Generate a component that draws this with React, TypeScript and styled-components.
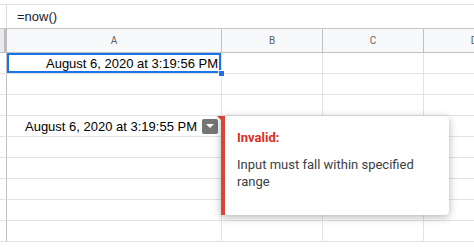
import { Fragment } from 'react';
import styled, { createGlobalStyle } from 'styled-components';

const GlobalStyle = createGlobalStyle`
  html, body {
    margin: 0;
    padding: 0;
    background: #fff;
  }
  * {
    box-sizing: border-box;
  }
`;

const Page = styled.div`
  position: relative;
  width: 474px;
  height: 247px;
  overflow: hidden;
  background: #fff;
  font-family: 'Liberation Sans', Arial, sans-serif;
`;

const TopStrip = styled.div`
  height: 5px;
  border-bottom: 1px solid #e0e0e0;
`;

const FormulaBar = styled.div`
  display: flex;
  height: 24px;
  border-bottom: 1px solid #c4c7c5;
`;

const FormulaGutter = styled.div`
  width: 7px;
  border-right: 1px solid #dadce0;
`;

const FormulaText = styled.div`
  padding-left: 10px;
  display: flex;
  align-items: center;
  font-size: 13px;
  color: #202124;
`;

const Sheet = styled.div`
  display: grid;
  grid-template-columns: 7px 215px 101px 101px 101px;
  grid-auto-rows: 21px;
  grid-template-rows: 24px;
`;

const Corner = styled.div`
  background: #e8eaed;
  border-right: 3px solid #bdbdbd;
  border-bottom: 1px solid #c0c0c0;
`;

const ColHeader = styled.div`
  display: flex;
  align-items: center;
  justify-content: center;
  background: #f8f9fa;
  border-right: 1px solid #c0c0c0;
  border-bottom: 1px solid #c0c0c0;
  font-family: Roboto, 'Liberation Sans', sans-serif;
  font-size: 10px;
  color: #5f6368;
`;

const RowHeader = styled.div`
  border-right: 1px solid #c0c0c0;
  border-bottom: 1px solid #e2e3e3;
`;

const Cell = styled.div<{ $selected?: boolean }>`
  position: relative;
  display: flex;
  align-items: center;
  justify-content: flex-end;
  gap: 5px;
  padding-right: ${({ $selected }) => ($selected ? '3px' : '2px')};
  border-right: 1px solid #e2e3e3;
  border-bottom: 1px solid #e2e3e3;
  font-size: 13px;
  color: #000;
  white-space: nowrap;
  ${({ $selected }) =>
    $selected &&
    `
    box-shadow: inset 0 0 0 2px #1a73e8;
  `}
`;

const FillHandle = styled.span`
  position: absolute;
  right: -4px;
  bottom: -4px;
  width: 7px;
  height: 7px;
  background: #1a73e8;
  border: 1px solid #fff;
  z-index: 2;
`;

const ErrorMark = styled.span`
  position: absolute;
  right: -1px;
  top: 0;
  width: 0;
  height: 0;
  border-top: 5px solid #db4437;
  border-left: 5px solid transparent;
  z-index: 3;
`;

const DropChip = styled.span`
  display: inline-flex;
  align-items: center;
  justify-content: center;
  width: 16px;
  height: 15px;
  border-radius: 2px;
  background: #757575;
  margin-right: 1px;
`;

const Caret = styled.span`
  width: 0;
  height: 0;
  border-left: 4px solid transparent;
  border-right: 4px solid transparent;
  border-top: 4px solid #fff;
`;

const Tooltip = styled.div`
  position: absolute;
  left: 221px;
  top: 116px;
  width: 228px;
  height: 99px;
  background: #fff;
  border-left: 4px solid #db4437;
  border-radius: 0 4px 4px 0;
  box-shadow: 0 2px 8px rgba(0, 0, 0, 0.3);
  padding: 14px 24px 0 12px;
  font-family: Roboto, 'Liberation Sans', sans-serif;
  z-index: 4;
`;

const TipTitle = styled.div`
  font-size: 13px;
  font-weight: 700;
  color: #d93025;
  line-height: 16px;
`;

const TipBody = styled.div`
  margin-top: 10px;
  font-size: 13px;
  line-height: 17px;
  color: #3c4043;
`;

const columns = ['A', 'B', 'C', 'D'];
const rowCount = 9;

const values: Record<number, string> = {
  0: 'August 6, 2020 at 3:19:56 PM',
  3: 'August 6, 2020 at 3:19:55 PM',
};

export default function App() {
  return (
    <Page>
      <GlobalStyle />
      <TopStrip />
      <FormulaBar>
        <FormulaGutter />
        <FormulaText>=now()</FormulaText>
      </FormulaBar>
      <Sheet>
        <Corner />
        {columns.map((c) => (
          <ColHeader key={c}>{c}</ColHeader>
        ))}
        {Array.from({ length: rowCount }).map((_, r) => (
          <Fragment key={r}>
            <RowHeader />
            <Cell $selected={r === 0}>
              {values[r]}
              {r === 3 && (
                <DropChip>
                  <Caret />
                </DropChip>
              )}
              {r === 0 && <FillHandle />}
              {r === 3 && <ErrorMark />}
            </Cell>
            <Cell />
            <Cell />
            <Cell />
          </Fragment>
        ))}
      </Sheet>
      <Tooltip>
        <TipTitle>Invalid:</TipTitle>
        <TipBody>Input must fall within specified range</TipBody>
      </Tooltip>
    </Page>
  );
}
